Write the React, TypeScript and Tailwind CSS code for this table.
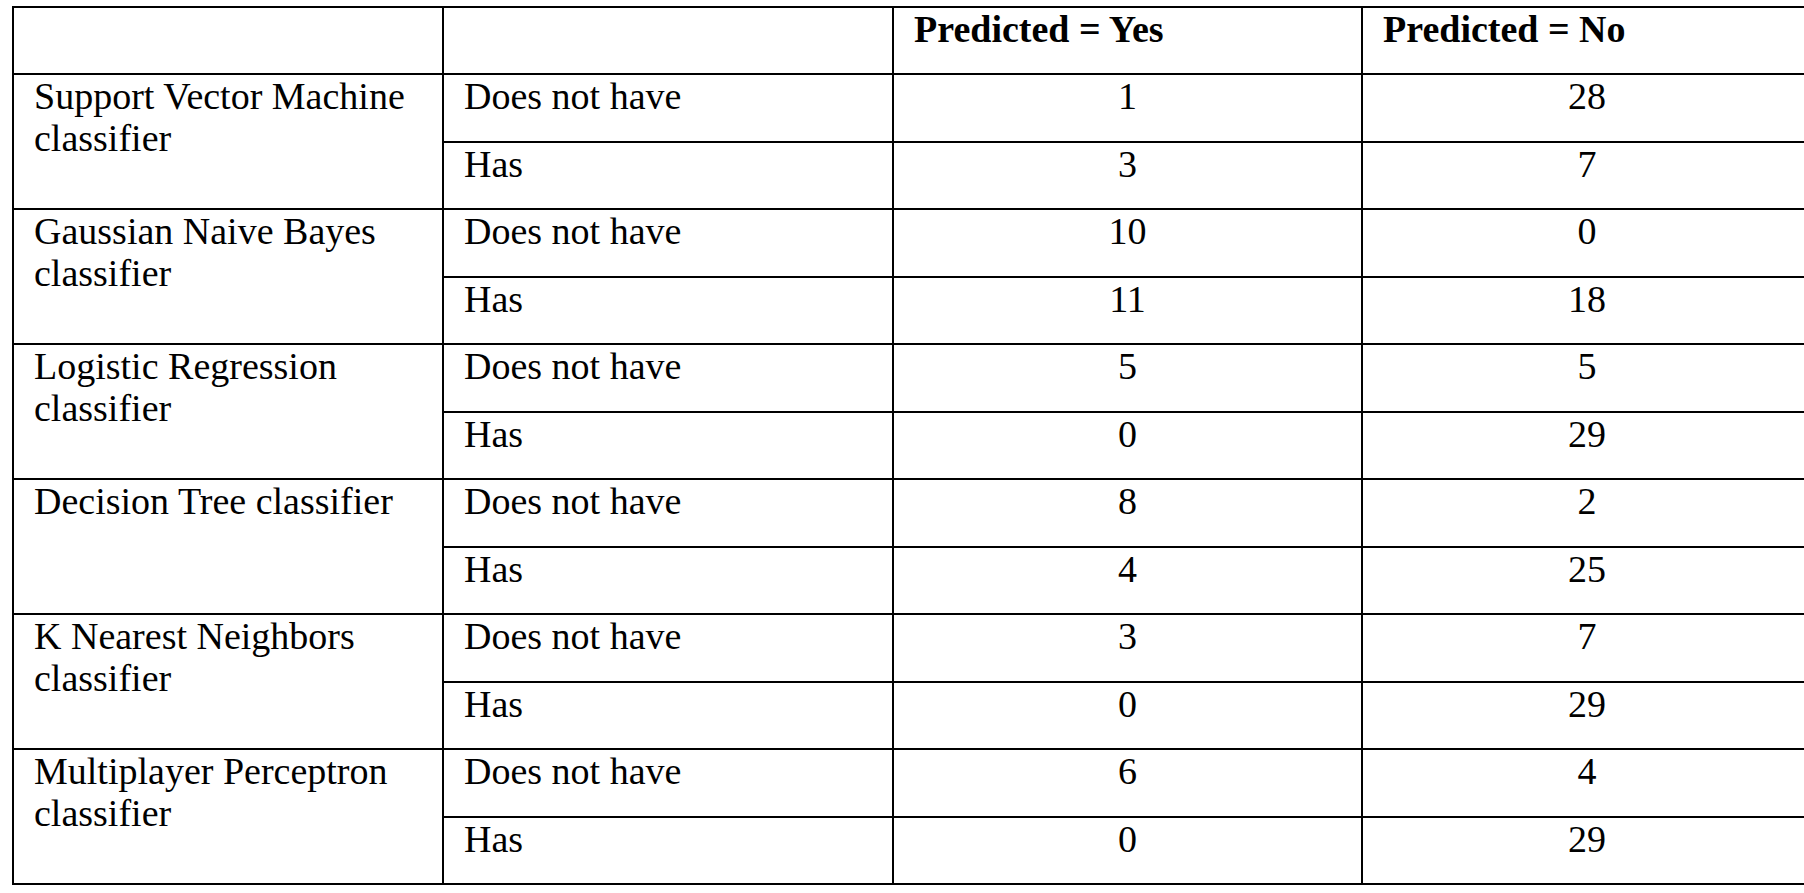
const rows = [
  { name: "Support Vector Machine classifier", without: ["1", "28"], has: ["3", "7"] },
  { name: "Gaussian Naive Bayes classifier", without: ["10", "0"], has: ["11", "18"] },
  { name: "Logistic Regression classifier", without: ["5", "5"], has: ["0", "29"] },
  { name: "Decision Tree classifier", without: ["8", "2"], has: ["4", "25"] },
  { name: "K Nearest Neighbors classifier", without: ["3", "7"], has: ["0", "29"] },
  { name: "Multiplayer Perceptron classifier", without: ["6", "4"], has: ["0", "29"] },
];

const cell = "border-r-2 border-b-2 border-black";

export default function App() {
  return (
    <div className="w-[1804px] h-[893px] overflow-hidden bg-white text-black font-['Liberation_Serif','Times_New_Roman',serif] text-[38px] leading-[42px]">
      <div className="ml-[12px] mt-[6px] w-[1801px] grid grid-cols-[430px_450px_469px_450px] grid-rows-[67px_repeat(12,67.5px)] border-l-2 border-t-2 border-black">
        {/* header */}
        <div className={cell} />
        <div className={cell} />
        <div className={`${cell} pl-[20px] font-bold`}>Predicted = Yes</div>
        <div className={`${cell} pl-[20px] font-bold`}>Predicted = No</div>

        {rows.map((r) => (
          <div key={r.name} className="contents">
            <div className={`${cell} row-span-2 pl-[20px] pr-[14px]`}>{r.name}</div>
            <div className={`${cell} pl-[20px]`}>Does not have</div>
            <div className={`${cell} text-center`}>{r.without[0]}</div>
            <div className={`${cell} text-center`}>{r.without[1]}</div>
            <div className={`${cell} pl-[20px]`}>Has</div>
            <div className={`${cell} text-center`}>{r.has[0]}</div>
            <div className={`${cell} text-center`}>{r.has[1]}</div>
          </div>
        ))}
      </div>
    </div>
  );
}
